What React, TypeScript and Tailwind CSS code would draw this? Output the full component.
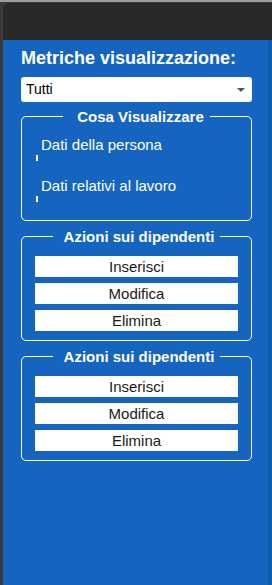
import React from "react";

const font = { fontFamily: '"Liberation Sans", Arial, sans-serif' };

function ActionGroup({ title }: { title: string }) {
  return (
    <fieldset className="mt-[7px] rounded-[5px] border border-white px-[13px] pb-[9px]">
      <legend className="mx-auto pr-[6px] pl-[11px] text-[15px] font-bold leading-[17px] text-white">{title}</legend>
      <div className="mt-[11px] flex flex-col gap-[6px]">
        {["Inserisci", "Modifica", "Elimina"].map((label) => (
          <button
            key={label}
            className="h-[21px] w-full bg-white text-[15px] leading-[21px] text-[#1a1a1a]"
          >
            {label}
          </button>
        ))}
      </div>
    </fieldset>
  );
}

export default function App() {
  return (
    <div className="relative flex h-[585px] w-[272px] flex-col bg-[#3a3a3a] pt-[3px] pl-[3px]" style={font}>
      <div className="absolute top-0 left-0 h-[2px] w-[272px] bg-[#9e9e9e]" />
      <div className="flex flex-1 flex-col overflow-hidden rounded-tl-[6px]">
        {/* dark title strip */}
        <div className="h-[37px] bg-[#292929]" />

        <div className="flex-1 border-r-[4px] border-[#105ab0] bg-[#1565c0] pt-[8px] pr-[16px] pl-[18px]">
          <h2 className="text-[18px] font-bold leading-[21px] text-white">Metriche visualizzazione:</h2>

          <div className="relative mt-[8px] flex h-[25px] items-center rounded-[3px] bg-white pl-[5px] text-[14px] text-black">
            Tutti
            <span className="absolute top-[11px] right-[7px] h-0 w-0 border-x-[4px] border-t-[4px] border-x-transparent border-t-[#555]" />
          </div>

          <fieldset className="mt-[6px] rounded-[5px] border border-white pb-[18px]">
            <legend className="mx-auto pr-[6px] pl-[14px] text-[15px] font-bold leading-[17px] text-white">
              Cosa Visualizzare
            </legend>
            <div className="mt-[11px]">
              <div className="pl-[19px] text-[15px] leading-[17px] text-white">Dati della persona</div>
              <div className="mt-[2px] ml-[14px] h-[6px] w-[2px] bg-white" />
            </div>
            <div className="mt-[16px]">
              <div className="pl-[19px] text-[15px] leading-[17px] text-white">Dati relativi al lavoro</div>
              <div className="mt-[2px] ml-[14px] h-[6px] w-[2px] bg-white" />
            </div>
          </fieldset>

          <ActionGroup title="Azioni sui dipendenti" />
          <ActionGroup title="Azioni sui dipendenti" />
        </div>
      </div>
    </div>
  );
}
